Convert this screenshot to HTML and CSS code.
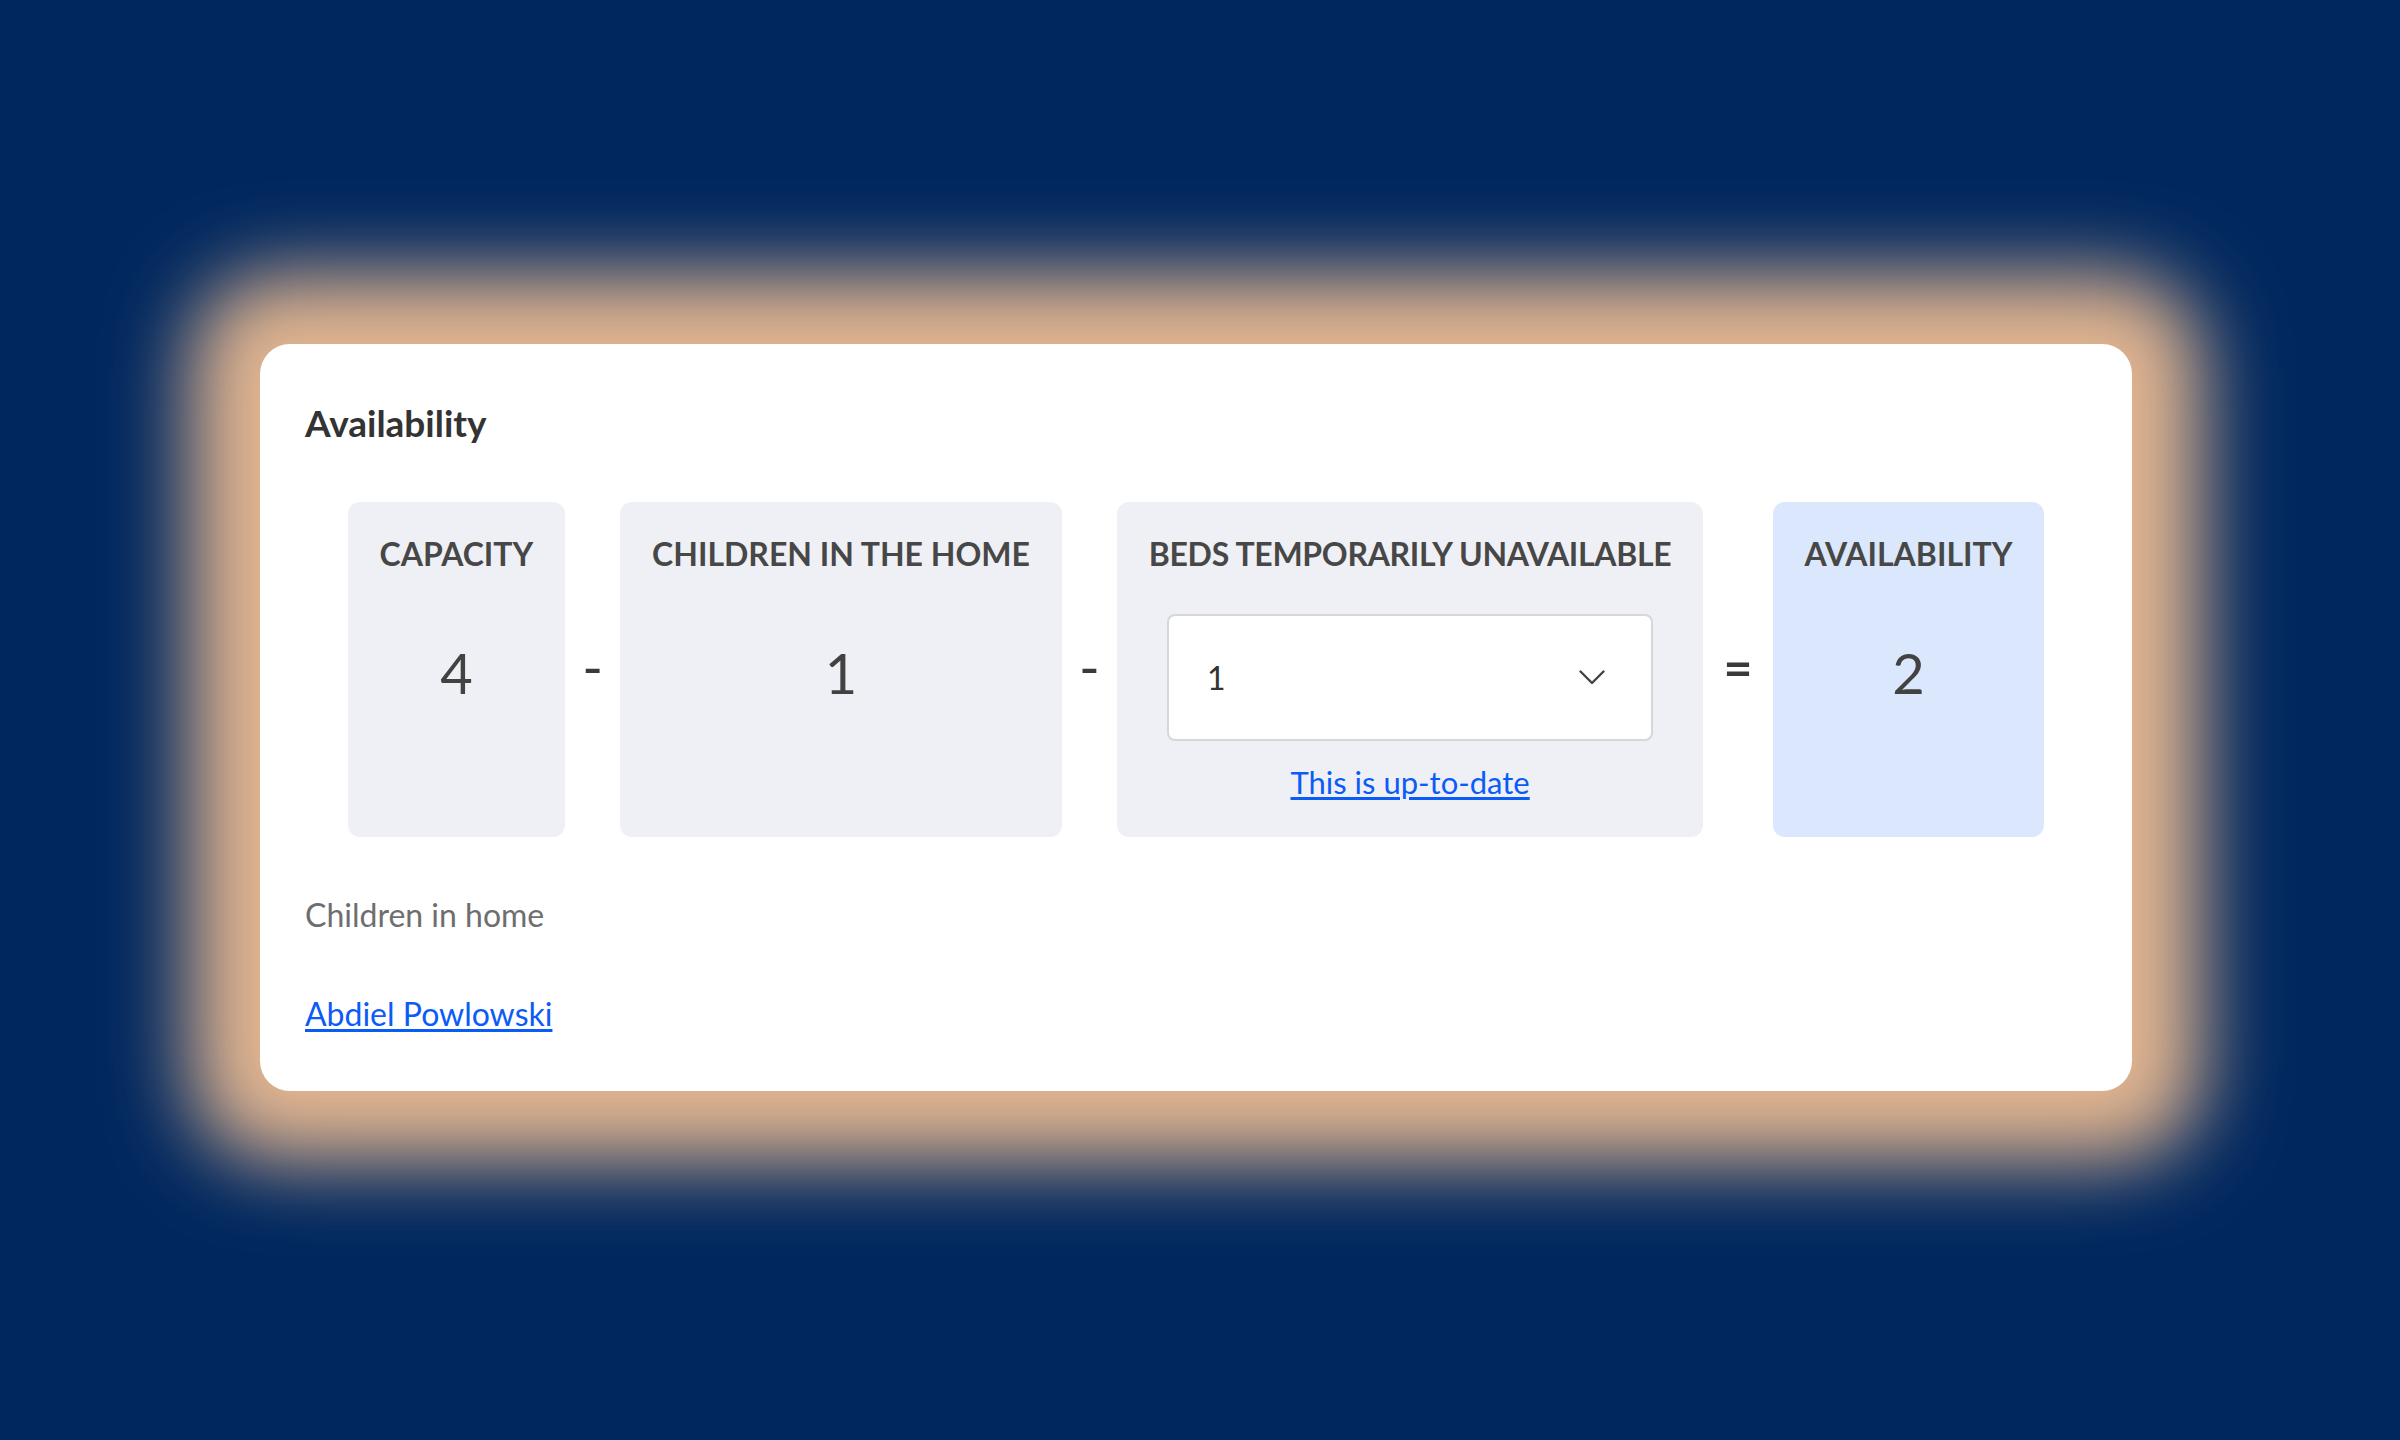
FILE: index.html
```html
<!DOCTYPE html>
<html lang="en">
<head>
<meta charset="utf-8">
<title>Availability</title>
<link rel="stylesheet" href="styles.css">
</head>
<body>
<main class="stage">
  <section class="card">
    <h2 class="card-title">Availability</h2>
    <div class="equation">
      <div class="tile">
        <div class="tile-label">CAPACITY</div>
        <div class="tile-value">4</div>
      </div>
      <div class="op">-</div>
      <div class="tile">
        <div class="tile-label">CHILDREN IN THE HOME</div>
        <div class="tile-value">1</div>
      </div>
      <div class="op">-</div>
      <div class="tile">
        <div class="tile-label tile-label-tight">BEDS TEMPORARILY UNAVAILABLE</div>
        <div class="select">
          <span class="select-text">1</span>
          <svg class="chevron" width="26" height="15" viewBox="0 0 26 15" aria-hidden="true">
            <path d="M1.5 1.5 L13 13 L24.5 1.5" fill="none" stroke="#444" stroke-width="2.4" stroke-linecap="round" stroke-linejoin="round"/>
          </svg>
        </div>
        <a class="tile-link" href="#">This is up-to-date</a>
      </div>
      <div class="op op-eq">=</div>
      <div class="tile tile-result">
        <div class="tile-label">AVAILABILITY</div>
        <div class="tile-value">2</div>
      </div>
    </div>
    <p class="list-heading">Children in home</p>
    <a class="child-link" href="#">Abdiel Powlowski</a>
  </section>
</main>
</body>
</html>
```
FILE: styles.css
```css
html, body {
  margin: 0;
  padding: 0;
}

body {
  width: 2400px;
  height: 1440px;
  background: #00285f;
  font-family: Lato, "Open Sans", "Liberation Sans", sans-serif;
  overflow: hidden;
}

.stage {
  padding: 344px 0 0 260px;
}

.card {
  width: 1872px;
  box-sizing: border-box;
  background: #ffffff;
  border-radius: 30px;
  padding: 56px 45px 58px;
  box-shadow: 0 0 80px 70px #e3b690;
  display: flex;
  flex-direction: column;
  align-items: flex-start;
}

.card-title {
  margin: 0;
  font-size: 37px;
  font-weight: 700;
  line-height: normal;
  color: #333333;
}

.equation {
  margin-top: 57px;
  align-self: stretch;
  display: flex;
  justify-content: center;
  align-items: stretch;
}

.tile {
  background: #eff0f5;
  border-radius: 12px;
  padding: 32px 32px 36px;
  display: flex;
  flex-direction: column;
  align-items: center;
}

.tile-result {
  background: #dbe7fd;
}

.tile-label {
  font-size: 32px;
  font-weight: 700;
  line-height: normal;
  color: #474747;
  white-space: nowrap;
  margin-bottom: 41px;
}

.tile-label-tight {
  letter-spacing: -0.3px;
}

.tile-value {
  height: 127px;
  display: flex;
  align-items: center;
  justify-content: center;
  font-size: 56px;
  font-weight: 400;
  color: #424242;
  padding-bottom: 10px;
  box-sizing: border-box;
}

.op {
  align-self: center;
  margin: 0 17px;
  padding-bottom: 6px;
  font-size: 56px;
  font-weight: 400;
  color: #3a3a3a;
  line-height: normal;
}

.op-eq {
  font-size: 50px;
  font-weight: 700;
  margin: 0 20px;
}

.select {
  width: 486px;
  height: 127px;
  box-sizing: border-box;
  background: #ffffff;
  border: 2px solid #d6d7dc;
  border-radius: 8px;
  display: flex;
  align-items: center;
  justify-content: space-between;
  padding: 0 46px 0 38px;
}

.select-text {
  font-size: 32px;
  color: #333333;
}

.chevron {
  display: block;
}

.tile-link {
  margin-top: 22px;
  font-size: 31px;
  line-height: normal;
  color: #0b5cf7;
  text-decoration: underline;
  text-underline-offset: 3px;
}

.list-heading {
  margin: 58px 0 0;
  font-size: 32px;
  line-height: normal;
  color: #6e6e6e;
}

.child-link {
  margin-top: 60px;
  font-size: 32px;
  line-height: normal;
  color: #0b5cf7;
  text-decoration: underline;
  text-underline-offset: 3px;
}
```
